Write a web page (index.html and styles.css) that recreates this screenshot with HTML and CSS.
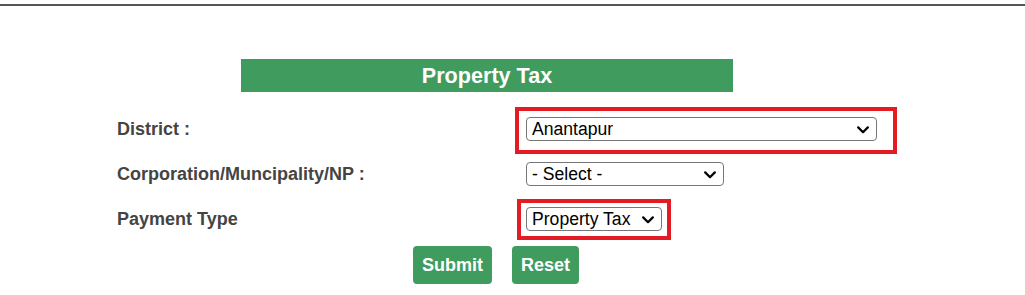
FILE: index.html
```html
<!DOCTYPE html>
<html lang="en">
<head>
<meta charset="utf-8">
<title>Property Tax</title>
<link rel="stylesheet" href="styles.css">
</head>
<body>
<div class="topline"></div>
<main class="page">
  <h1 class="title">Property Tax</h1>
  <form class="form">
    <label class="label" for="district">District :</label>
    <div class="field">
      <span class="mark mark-district">
        <span class="selwrap">
          <select id="district" class="sel sel-district">
            <option>Anantapur</option>
          </select>
          <svg class="chev" viewBox="0 0 12 8" aria-hidden="true"><path d="M1.2 1.4 6 6.2 10.8 1.4"/></svg>
        </span>
      </span>
    </div>
    <label class="label" for="corp">Corporation/Muncipality/NP :</label>
    <div class="field">
      <span class="selwrap">
        <select id="corp" class="sel sel-corp">
          <option>- Select -</option>
        </select>
        <svg class="chev" viewBox="0 0 12 8" aria-hidden="true"><path d="M1.2 1.4 6 6.2 10.8 1.4"/></svg>
      </span>
    </div>
    <label class="label" for="ptype">Payment Type</label>
    <div class="field">
      <span class="mark mark-ptype">
        <span class="selwrap">
          <select id="ptype" class="sel sel-ptype">
            <option>Property Tax</option>
          </select>
          <svg class="chev" viewBox="0 0 12 8" aria-hidden="true"><path d="M1.2 1.4 6 6.2 10.8 1.4"/></svg>
        </span>
      </span>
    </div>
    <div class="actions">
      <button type="button" class="btn">Submit</button>
      <button type="reset" class="btn">Reset</button>
    </div>
  </form>
</main>
</body>
</html>
```
FILE: styles.css
```css
html, body {
  margin: 0;
  padding: 0;
  background: #ffffff;
}
body {
  font-family: "Liberation Sans", Arial, sans-serif;
}
.topline {
  height: 4px;
  border-bottom: 2px solid #555555;
}
.page {
  padding-top: 53px;
}
.title {
  margin: 0 0 0 241px;
  width: 492px;
  height: 33px;
  line-height: 33px;
  background: #409c5e;
  color: #ffffff;
  font-size: 21.6px;
  font-weight: bold;
  text-align: center;
}
.form {
  display: grid;
  grid-template-columns: 409px auto;
  row-gap: 21px;
  margin: 25px 0 0 117px;
  align-items: center;
}
.label {
  font-size: 18px;
  font-weight: bold;
  color: #444444;
  line-height: 24px;
}
.field {
  display: flex;
  height: 24px;
  align-items: center;
}
.selwrap {
  position: relative;
  display: inline-flex;
}
.sel {
  -webkit-appearance: none;
  appearance: none;
  height: 24px;
  font-family: "Liberation Sans", Arial, sans-serif;
  font-size: 17.6px;
  color: #000000;
  background: #ffffff;
  border: 1px solid #767676;
  border-radius: 4px;
  padding: 0 24px 0 5px;
  margin: 0;
}
.chev {
  position: absolute;
  right: 8px;
  top: 9px;
  width: 12px;
  height: 8px;
  fill: none;
  stroke: #000000;
  stroke-width: 2.2;
  stroke-linecap: round;
  stroke-linejoin: round;
  pointer-events: none;
}
.sel-district { width: 351px; }
.sel-corp { width: 198px; }
.sel-ptype { width: 136px; }
.mark {
  position: relative;
  display: inline-flex;
}
.mark::after {
  content: "";
  position: absolute;
  border: 4px solid #e31b23;
  pointer-events: none;
}
.mark-district::after {
  top: -10px;
  left: -11px;
  right: -20px;
  bottom: -13px;
}
.mark-ptype::after {
  top: -8px;
  left: -9px;
  right: -9px;
  bottom: -9px;
}
.actions {
  grid-column: 1 / -1;
  display: flex;
  gap: 20px;
  padding-left: 296px;
  margin-top: -6px;
}
.btn {
  height: 38px;
  padding: 0 9px;
  border: none;
  border-radius: 4px;
  background: #409c5e;
  color: #ffffff;
  font-family: "Liberation Sans", Arial, sans-serif;
  font-size: 18px;
  font-weight: bold;
  cursor: pointer;
}
```
